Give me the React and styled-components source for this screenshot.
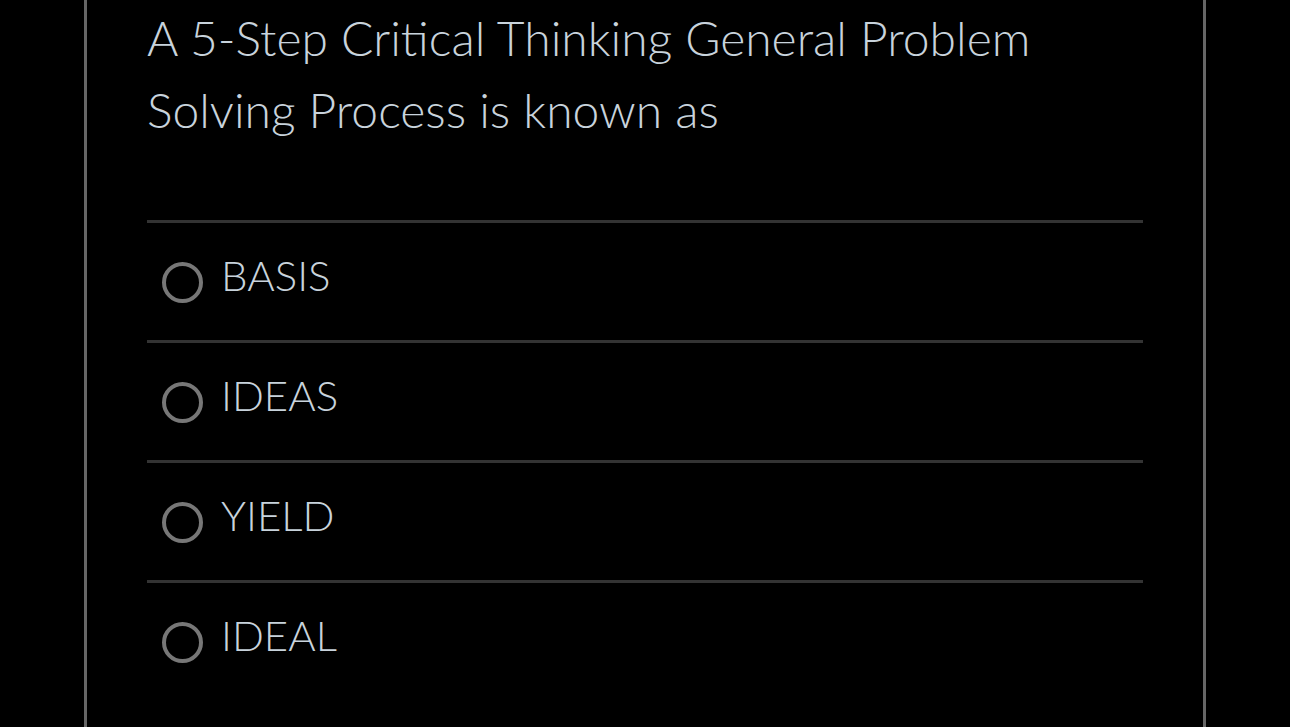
import React from 'react';
import styled, { createGlobalStyle } from 'styled-components';

const Global = createGlobalStyle`
  html, body {
    margin: 0;
    background: #000;
    font-family: Lato, "Open Sans", sans-serif;
  }
`;

const Page = styled.div`
  min-height: 727px;
  background: #000;
  overflow: hidden;
`;

const Panel = styled.div`
  margin-left: 84px;
  width: 996px;
  min-height: 727px;
  border-left: 3px solid #666;
  border-right: 3px solid #666;
  padding: 2px 60px 0 60px;
  box-sizing: content-box;
`;

const Question = styled.h1`
  margin: 0 0 74px;
  font-size: 48px;
  font-weight: 300;
  line-height: 72px;
  color: #c8d3dc;
`;

const Option = styled.label`
  display: flex;
  align-items: flex-start;
  gap: 18px;
  height: 120px;
  box-sizing: border-box;
  padding: 27px 0 0 15px;
  border-top: 3px solid #333;
  cursor: pointer;
`;

const Radio = styled.span`
  width: 41px;
  height: 41px;
  box-sizing: border-box;
  margin-top: 12px;
  border: 4px solid #777;
  border-radius: 50%;
  flex-shrink: 0;
`;

const Label = styled.span`
  font-size: 42px;
  font-weight: 300;
  line-height: 50px;
  color: #c8d3dc;
`;

const options = ['BASIS', 'IDEAS', 'YIELD', 'IDEAL'];

export default function App() {
  return (
    <Page>
      <Global />
      <Panel>
        <Question>
          A 5-Step Critical Thinking General Problem Solving Process is known as
        </Question>
        {options.map((o) => (
          <Option key={o}>
            <Radio />
            <Label>{o}</Label>
          </Option>
        ))}
      </Panel>
    </Page>
  );
}
